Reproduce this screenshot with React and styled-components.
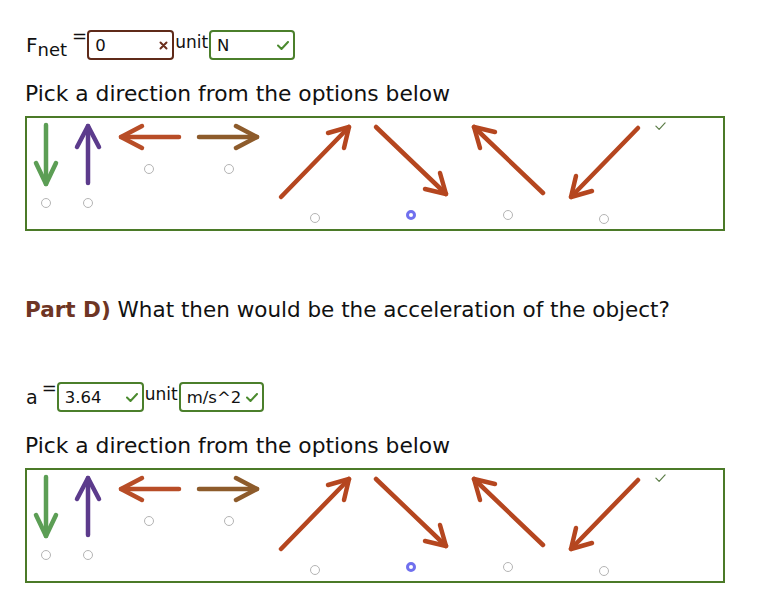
import React from 'react';
import styled, { createGlobalStyle } from 'styled-components';

const GlobalStyle = createGlobalStyle`
  body {
    margin: 0;
    background: #ffffff;
    font-family: "DejaVu Sans", "Liberation Sans", sans-serif;
    color: #111111;
  }
`;

const Page = styled.div`
  padding: 30px 0 20px 25px;
  width: 700px;
`;

const AnswerRow = styled.div`
  display: flex;
  align-items: center;
  height: 30px;
  margin-top: ${props => props.$top || 0}px;
`;

const Symbol = styled.span`
  font-size: ${props => props.$size || 20}px;
  line-height: 30px;
  padding-left: 1px;

  sub {
    font-size: 18px;
    vertical-align: -4px;
    line-height: 0;
  }
`;

const Equals = styled.span`
  font-size: 18px;
  align-self: flex-start;
  line-height: 18px;
  margin: -3px 0 0 ${props => props.$gap || 8}px;
`;

const AnswerBox = styled.div`
  box-sizing: border-box;
  width: ${props => props.$width}px;
  height: 30px;
  border: 2px solid ${props => (props.$wrong ? '#5f2a19' : '#4b7f2b')};
  border-radius: 4px;
  display: flex;
  align-items: center;
  justify-content: space-between;
  padding: 0 4px 0 6px;
  font-size: 16.5px;
`;

const UnitLabel = styled.span`
  font-size: 17px;
  padding: 0 1px;
  align-self: flex-start;
  line-height: 24px;
`;

const Prompt = styled.div`
  font-size: 21.8px;
  line-height: 26px;
  margin-top: 21px;
`;

const Question = styled.div`
  font-size: 21.5px;
  line-height: 26px;
  margin-top: 66px;

  strong {
    color: #6e3524;
  }
`;

const ChoiceBox = styled.div`
  margin-top: 9px;
  border: 2px solid #4b7a28;
  display: flex;
  align-items: flex-start;
  gap: 12px;
  padding: 4px 0 5px 4px;
`;

const Option = styled.label`
  width: ${props => props.$width}px;
  display: flex;
  flex-direction: column;
  align-items: center;
`;

const Radio = styled.span`
  box-sizing: border-box;
  width: 10px;
  height: 10px;
  margin-top: 8px;
  border-radius: 50%;
  border: ${props => (props.$checked ? '3px solid #7070ee' : '1px solid #b4b4b4')};
  background: #ffffff;
`;

const Mark = styled.svg`
  flex-shrink: 0;
`;

const BoxCheck = styled.span`
  margin-left: -4px;
  display: flex;
`;

const Check = ({ size = 12, color = '#4b8a2e', width = 2 }) => (
  <Mark width={size} height={size * 0.75} viewBox="0 0 12 9">
    <path d="M1 4.5 L4.5 8 L11 1" fill="none" stroke={color} strokeWidth={width} strokeLinecap="round" strokeLinejoin="round" />
  </Mark>
);

const Cross = () => (
  <Mark width={9} height={9} viewBox="0 0 9 9">
    <path d="M1.5 1.5 L7.5 7.5 M7.5 1.5 L1.5 7.5" stroke="#6b2e1c" strokeWidth="2" strokeLinecap="round" />
  </Mark>
);

const arrows = [
  { w: 30, h: 68, color: '#5c9e55', line: [15, 3, 15, 62], head: '5,41 15,62 25,41' },
  { w: 30, h: 68, color: '#5c3b8c', line: [15, 61, 15, 4], head: '4,25 15,4 26,25' },
  { w: 68, h: 34, color: '#b84d27', line: [64, 15, 6, 15], head: '27,4 6,15 27,26' },
  { w: 68, h: 34, color: '#8d5b2b', line: [4, 15, 62, 15], head: '41,4 62,15 41,26' },
  { w: 80, h: 83, color: '#b5461f', line: [6, 75, 74, 5], head: '53,11 74,5 69,26' },
  { w: 88, h: 80, color: '#b5461f', line: [9, 5, 79, 72], head: '73,51 79,72 58,67', checked: true },
  { w: 82, h: 80, color: '#b5461f', line: [76, 71, 7, 5], head: '28,10 7,5 13,26' },
  { w: 86, h: 84, color: '#b5461f', line: [77, 6, 10, 75], head: '31,69 10,75 15,54' },
];

const Arrow = ({ w, h, color, line, head }) => (
  <svg width={w} height={h} viewBox={`0 0 ${w} ${h}`}>
    <line x1={line[0]} y1={line[1]} x2={line[2]} y2={line[3]} stroke={color} strokeWidth="4.5" strokeLinecap="round" />
    <polyline points={head} fill="none" stroke={color} strokeWidth="4.5" strokeLinecap="round" strokeLinejoin="round" />
  </svg>
);

const DirectionPicker = () => (
  <ChoiceBox>
    {arrows.map((a, i) => (
      <Option key={i} $width={a.w}>
        <Arrow {...a} />
        <Radio $checked={a.checked} />
      </Option>
    ))}
    <BoxCheck>
      <Check size={11} color="#5c7d48" width={1.3} />
    </BoxCheck>
  </ChoiceBox>
);

export default function App() {
  return (
    <Page>
      <GlobalStyle />
      <AnswerRow>
        <Symbol>F<sub>net</sub></Symbol>
        <Equals $gap={5}>=</Equals>
        <AnswerBox $width={87} $wrong>
          <span>0</span>
          <Cross />
        </AnswerBox>
        <UnitLabel>unit</UnitLabel>
        <AnswerBox $width={86}>
          <span>N</span>
          <Check />
        </AnswerBox>
      </AnswerRow>
      <Prompt>Pick a direction from the options below</Prompt>
      <DirectionPicker />

      <Question>
        <strong>Part D)</strong> What then would be the acceleration of the object?
      </Question>

      <AnswerRow $top={59}>
        <Symbol $size={19}>a</Symbol>
        <Equals $gap={4}>=</Equals>
        <AnswerBox $width={87}>
          <span>3.64</span>
          <Check />
        </AnswerBox>
        <UnitLabel>unit</UnitLabel>
        <AnswerBox $width={85}>
          <span>m/s^2</span>
          <Check />
        </AnswerBox>
      </AnswerRow>
      <Prompt>Pick a direction from the options below</Prompt>
      <DirectionPicker />
    </Page>
  );
}
